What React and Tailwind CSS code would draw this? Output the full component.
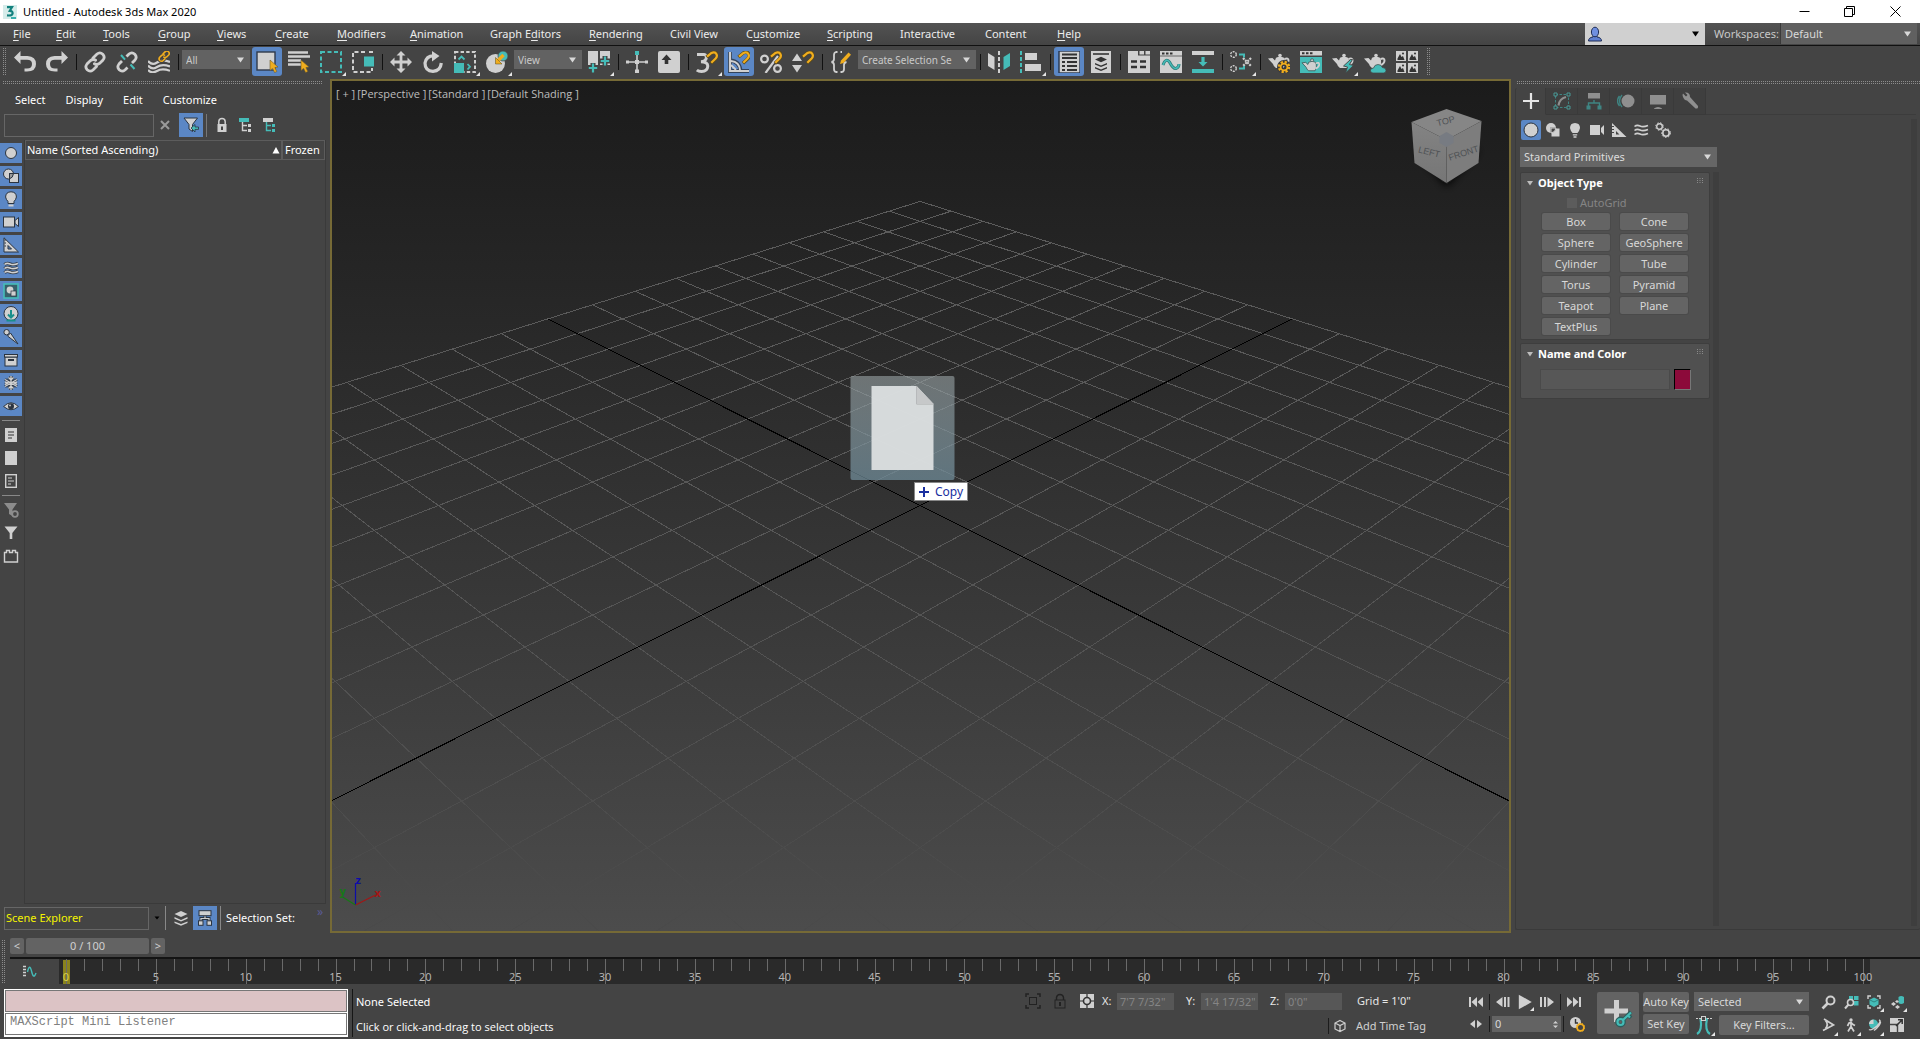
import React from "react";

const W = "#d0d0d0";
const T = "#45bcb8";
const O = "#f0ad1e";
const D = "#333333";

function Svg({ size = 22, vb = 22, className = "", children }) {
  return (
    <svg width={size} height={size} viewBox={`0 0 ${vb} ${vb}`} fill="none" className={`shrink-0 ${className}`} aria-hidden="true">
      {children}
    </svg>
  );
}

const Teapot = ({ fill = W, stroke = "none" }) => (
  <g stroke={stroke} strokeWidth="1" fill={fill}>
    <circle cx="12" cy="4.5" r="1.8" />
    <path d="M0 7.5 L4.5 7 L7 9.5 L8 6.8 Q12 4.6 16 6.8 L17 9 Q18 13 15.5 17 L8 17 Q5.5 15.5 5 13 Z" />
    <path d="M16.5 8 Q20.5 6.5 20.5 9.5 Q20.5 12.5 16 14.5" fill="none" stroke={fill} strokeWidth="2" />
  </g>
);

const Cursor = () => <path d="M14 9 L14 19.5 L16.6 17.4 L18.6 21.6 L20.8 20.6 L18.9 16.6 L22 16 Z" fill={O} stroke="#6b5a2a" strokeWidth=".6" />;

const Magnet = () => (
  <g fill="none">
    <path d="M10.5 6 L15.5 1.8 Q19 0 20.8 3 Q22 5.5 19.8 7.8 L15 12.2" stroke="#5a4a1a" strokeWidth="3.4" />
    <path d="M11 5.7 L15.5 2 Q19 .3 20.5 3.2 Q21.6 5.5 19.6 7.6 L15.3 11.8" stroke={O} strokeWidth="2.2" />
  </g>
);

const Chain = ({ color = W }) => (
  <g stroke={color} strokeWidth="2.8" strokeLinecap="round" fill="none">
    <path d="M9 7 L13 3 Q16 .6 18.8 3.2 Q21.4 6 19 9 L15.5 12.4 Q13 14.4 10.4 12.8" />
    <path d="M12.5 15.5 L9 19 Q6 21.4 3.2 18.8 Q.6 16 3 13 L6.5 9.6 Q9 7.6 11.6 9.2" />
  </g>
);

const TB = {
  undo: <path d="M0 6.5 L6.5 0 V5 H13.5 Q22 5.5 22 13 Q22 20.5 13 20.5 H10.5 V17.5 H13 Q18 17.5 18 13 Q18 8.8 13 8.8 H6.5 V13 Z" fill={W} />,
  redo: <path d="M22 6.5 L15.5 0 V5 H8.5 Q0 5.5 0 13 Q0 20.5 9 20.5 H11.5 V17.5 H9 Q4 17.5 4 13 Q4 8.8 9 8.8 H15.5 V13 Z" fill={W} />,
  link: <Chain />,
  unlink: (
    <>
      <g stroke={W} strokeWidth="2.8" fill="none">
        <path d="M10.5 5.5 L13 3 Q16 .6 18.8 3.2 Q21.4 6 19 9 L16 12" />
        <path d="M11.5 16.5 L9 19 Q6 21.4 3.2 18.8 Q.6 16 3 13 L6 10" />
      </g>
      <path d="M5 4 L9 8.6 M14.5 13.5 L18.5 18" stroke={T} strokeWidth="2" />
    </>
  ),
  bind: (
    <>
      <path d="M0 10 Q4 15 9 11.5 T22 11 M0 14.5 Q4 19.5 9 16 T22 15.5 M0 19 Q4 23 9 20 T22 19.8" stroke={W} strokeWidth="2.2" />
      <g transform="translate(10 -1) scale(.56)"><g stroke="#444" strokeWidth="6"><path d="M9 7 L13 3 Q16 .6 18.8 3.2 Q21.4 6 19 9 L15.5 12.4" /><path d="M12.5 15.5 L9 19 Q6 21.4 3.2 18.8 Q.6 16 3 13 L6.5 9.6" /></g><Chain color={O} /></g>
    </>
  ),
  select: (
    <>
      <rect x="1" y="1" width="18" height="18" fill={W} stroke="#2f3a4a" strokeWidth="1.4" />
      <Cursor />
    </>
  ),
  byName: (
    <>
      <path d="M0 1.5 H20 M0 5.5 H22 M0 9.5 H13 M0 13.5 H13" stroke={W} strokeWidth="2.4" />
      <g transform="translate(-1 0)"><Cursor /></g>
    </>
  ),
  rectSel: <rect x="1" y="1" width="20" height="20" stroke={T} strokeWidth="2" strokeDasharray="4 2.5" />,
  windowSel: (
    <>
      <path d="M13 1 H1 V21 H20 V17 M17 1 H20 V4" stroke={W} strokeWidth="2" strokeDasharray="4 2.5" />
      <rect x="12" y="5.5" width="10" height="10" fill={T} />
    </>
  ),
  move: <path d="M11 0 L15.5 4.5 H12.4 V9.6 H17.5 V6.5 L22 11 L17.5 15.5 V12.4 H12.4 V17.5 H15.5 L11 22 L6.5 17.5 H9.6 V12.4 H4.5 V15.5 L0 11 L4.5 6.5 V9.6 H9.6 V4.5 H6.5 Z" fill={W} />,
  rotate: (
    <>
      <path d="M13.5 5 Q4.5 4 3 12 Q3 20 11 20.3 Q18.5 20 19.3 12" stroke={W} strokeWidth="3.2" />
      <path d="M10 0 L17.5 5 L10 10.5 Z" fill={W} />
    </>
  ),
  scale: (
    <>
      <rect x="1" y="1" width="20" height="20" stroke={W} strokeWidth="2" strokeDasharray="3.4 2.2" />
      <rect x="0" y="12" width="10" height="10" fill={T} />
      <path d="M4.5 8.5 L7.5 5.5 L10.5 8.5 M13.5 13 L16 15.7 L13.5 18.5" stroke={T} strokeWidth="1.8" />
    </>
  ),
  place: (
    <>
      <circle cx="9.5" cy="12.5" r="9.5" fill={W} />
      <circle cx="17" cy="5" r="5" fill={T} stroke="#4a4a4a" strokeWidth=".8" />
      <path d="M17.5 4 L11 10.5" stroke={O} strokeWidth="3.4" />
      <path d="M9.5 6.5 V13 H16 Z" fill={O} stroke="#5a4a1a" strokeWidth=".5" />
    </>
  ),
  center: (
    <>
      <rect x="0" y="0" width="10" height="14" fill={W} />
      <rect x="12" y="0" width="10" height="14" fill={W} />
      <path d="M5 12 V22 M0 17 H10 M17 5 V15 M12 10 H22" stroke="#444" strokeWidth="5" />
      <path d="M5 12.5 V21.5 M.8 17 H9.2 M17 5.5 V14.5 M12.8 10 H21.2" stroke={T} strokeWidth="2.2" />
    </>
  ),
  manip: (
    <>
      <path d="M11 3 V20 M2 11 H20" stroke={W} strokeWidth="1.6" />
      <rect x="9" y="0" width="4" height="4" fill={T} />
      <rect x="9" y="9" width="4" height="4" fill={W} />
      <rect x="0" y="9.5" width="3" height="3" fill={W} />
      <rect x="19" y="9.5" width="3" height="3" fill={W} />
      <rect x="9" y="18.5" width="4" height="3.5" fill={W} />
    </>
  ),
  keyboard: (
    <>
      <rect x="0" y="0" width="22" height="22" rx="2" fill={W} />
      <path d="M8.5 3.5 L13.5 9 H10.3 V13 H6.7 V9 H3.5 Z" fill={D} />
    </>
  ),
  snap3: (
    <>
      <path d="M1 3.6 H8 Q10.800 4 10.300 7 Q9.800 10.400 5 10.800 Q11.600 11 11.800 15 Q11.500 20.500 5.500 20.500 Q2.500 20.500 .8 19" stroke={W} strokeWidth="3" />
      <Magnet />
    </>
  ),
  angle: (
    <>
      <path d="M2 1 V20 H21 M2 9.5 Q11.5 10 12.5 20" stroke="#33435a" strokeWidth="4" />
      <path d="M2 1 V20 H21" stroke={W} strokeWidth="2.2" />
      <path d="M3 10 Q11.5 11 12 19 M3 14 L8 19" stroke={W} strokeWidth="1.8" />
      <Magnet />
    </>
  ),
  percent: (
    <>
      <circle cx="4.5" cy="8" r="3.4" stroke={W} strokeWidth="2.2" />
      <circle cx="17.5" cy="17.5" r="3.4" stroke={W} strokeWidth="2.2" />
      <path d="M18 5 L5.5 22" stroke={W} strokeWidth="2.2" />
      <Magnet />
    </>
  ),
  spinner: (
    <>
      <path d="M0 10 L5 2.5 L10 10 Z M0 14 L5 21.5 L10 14 Z" fill={W} />
      <Magnet />
    </>
  ),
  selSet: (
    <>
      <path d="M7.5 1 H6 Q4 1.5 4 4 V8 Q4 10.5 1.5 11 Q4 11.5 4 14 V18 Q4 20.5 6 21 H7.5 M10.5 1 H12 M10.5 21 H12 Q14 20.5 14 18 V14 Q14 11.5 16.5 11" stroke={W} strokeWidth="1.8" />
      <path d="M10 13 L11 9.5 L18.5 1.5 L21 3.8 L13.5 12 Z" fill={O} />
    </>
  ),
  mirror: (
    <>
      <path d="M0 2 L6.5 6 V19 L0 15 Z" fill={W} />
      <path d="M11 0 V22" stroke={W} strokeWidth="2" strokeDasharray="4 2" />
      <path d="M22 2 L15.5 6 V19 L22 15 Z" fill={T} />
    </>
  ),
  align: (
    <>
      <path d="M1 0 V22" stroke={T} strokeWidth="2" strokeDasharray="4 2" />
      <rect x="5" y="2" width="12" height="7" fill={W} />
      <rect x="5" y="13" width="16" height="7" fill={W} />
    </>
  ),
  explorer: (
    <>
      <rect x="1" y="0" width="21" height="22" fill={W} stroke="#26344c" strokeWidth="1.4" />
      <path d="M4 3.5 H19 M4 7 H19 M4 11 H7 M9 11 H19 M4 15 H7 M9 15 H19 M4 19 H7 M9 19 H19" stroke={D} strokeWidth="1.8" />
    </>
  ),
  layers: (
    <>
      <rect x="1" y="0" width="20" height="22" fill={W} />
      <path d="M3 3 H19" stroke={D} strokeWidth="1.6" />
      <path d="M5 8.5 L11 5.8 L17 8.5 L11 11.2 Z M5 12 L11 14.5 L17 12 V13.6 L11 16 L5 13.6 Z M5 16 L11 18.5 L17 16 V17.6 L11 20 L5 17.6 Z" fill={D} />
    </>
  ),
  ribbon: (
    <>
      <path d="M0 0 H10 V4.5 H22 V22 H0 Z M11.5 0 H16 V3.5 H11.5 Z M17.5 0 H22 V3.5 H17.5 Z" fill={W} />
      <path d="M3 10.5 H9 M12 10.5 H18 M3 16 H9 M12 16 H18" stroke={D} strokeWidth="2.4" />
    </>
  ),
  curve: (
    <>
      <rect x="0" y="0" width="22" height="22" fill={W} />
      <path d="M2 2.5 H4.5 M6 2.5 H8.5 M10 2.5 H12.5" stroke={D} strokeWidth="2" />
      <path d="M0 5 H22" stroke="#666" strokeWidth="1" />
      <path d="M3 14 Q5.5 6.5 9.5 11 Q13 18 16 17.5 Q19 16.5 19 13" stroke="#2f7d7b" strokeWidth="3" />
      <path d="M3 14 Q5.5 6.5 9.5 11 Q13 18 16 17.5 Q19 16.5 19 13" stroke={T} strokeWidth="1.4" />
    </>
  ),
  schematic: (
    <>
      <rect x="0" y="0" width="22" height="4" fill={W} />
      <path d="M9.4 6 H12.6 V11 H15.5 L11 15.5 L6.5 11 H9.4 Z" fill={T} />
      <rect x="0" y="18" width="22" height="4" fill={T} />
    </>
  ),
  material: (
    <>
      <g stroke={W} strokeWidth="1.4" strokeDasharray="2 1">
        <circle cx="3.5" cy="3.5" r="2.8" />
        <circle cx="3.5" cy="17.5" r="2.8" />
        <path d="M13 7 L21 15 M21 7 L13 15" strokeWidth="2.2" />
      </g>
      <path d="M9 3.5 H14 V6.5 M9 17.5 H14 V15" stroke={T} strokeWidth="2" />
    </>
  ),
  renderSetup: (
    <>
      <Teapot />
      <circle cx="16" cy="16" r="4" stroke="#3a3a3a" strokeWidth="6" />
      <circle cx="16" cy="16" r="5" stroke={O} strokeWidth="2.4" strokeDasharray="2.2 1.73" />
      <circle cx="16" cy="16" r="3.4" stroke={O} strokeWidth="1.8" />
    </>
  ),
  renderFrame: (
    <>
      <rect x="0" y="0" width="22" height="4.5" fill={W} />
      <path d="M2 2.3 H4.5 M6 2.3 H8.5 M10 2.3 H12.5" stroke={D} strokeWidth="2" />
      <rect x="0" y="6" width="22" height="16" fill={T} />
      <g transform="translate(2 5.5) scale(.84)"><Teapot stroke="#3a5a5a" /></g>
    </>
  ),
  render: (
    <>
      <Teapot />
      <path d="M18.5 8.5 L11.5 15 L15.5 16 L13.5 22 L21.5 14.5 L17.5 13.5 L20.5 8.5 Z" fill={T} stroke="#444" strokeWidth=".9" />
    </>
  ),
  cloud: (
    <>
      <Teapot />
      <path d="M9 22 Q6.5 22 6.5 19.5 Q6.5 17 9.5 17 Q10.5 13.5 14 13.5 Q17.5 13.5 18.3 16.5 Q22 16.5 22 19.5 Q22 22 19.5 22 Z" fill={T} stroke="#444" strokeWidth=".7" />
    </>
  ),
  gallery: (
    <>
      {[[0, 0], [12, 0], [0, 12], [12, 12]].map(([x, y]) => (
        <g key={`${x}-${y}`} transform={`translate(${x} ${y})`}>
          <rect width="10" height="10" fill={W} />
          <path d="M1.5 9 V7.5 L4 3 L5.5 6 L7 5 L8.5 9 Z" fill={D} />
          <circle cx="7" cy="2.6" r="1" fill={D} />
        </g>
      ))}
    </>
  ),
};

function Corner() {
  return (
    <svg width="4" height="4" viewBox="0 0 4 4" className="absolute bottom-0 right-0" aria-hidden="true">
      <path d="M4 0 V4 H0 Z" fill="#e6e6e6" />
    </svg>
  );
}

function Tool({ id, label, active, corner }) {
  return (
    <button aria-label={label} className={`relative mx-px flex h-[29px] w-[30px] items-center justify-center rounded-[3px] ${active ? "bg-[#5b87c5]" : ""}`}>
      <Svg>{TB[id]}</Svg>
      {corner && <Corner />}
    </button>
  );
}

const Sep = () => <div className="flex w-1.5 justify-center"><div className="h-4 w-px bg-[#111]" /></div>;

function Combo({ label, value, className = "", arrow = "#d8d8d8", pad = "pl-1" }) {
  return (
    <div className={`relative flex items-center ${className}`}>
      <select aria-label={label} defaultValue={value} className={`h-full w-full appearance-none bg-transparent pr-5 outline-none ${pad}`}>
        <option>{value}</option>
      </select>
      <svg width="7" height="6" viewBox="0 0 7 6" className="pointer-events-none absolute right-[6px]" aria-hidden="true">
        <path d="M0 .5 H7 L3.5 5.5 Z" fill={arrow} />
      </svg>
    </div>
  );
}

const DOTS_H = "h-px bg-[repeating-linear-gradient(90deg,#8c8c8c_0_1px,transparent_1px_2px)]";
const DOTS_V = "w-px bg-[repeating-linear-gradient(180deg,#8c8c8c_0_1px,transparent_1px_2px)]";
const HGrip = ({ className = "" }) => (
  <div className={`flex flex-col gap-px ${className}`}><div className={DOTS_H} /><div className={DOTS_H} /></div>
);
const VGrip = ({ className = "" }) => (
  <div className={`flex gap-px ${className}`}><div className={DOTS_V} /><div className={DOTS_V} /></div>
);

function TitleBar() {
  return (
    <header className="flex h-[23px] shrink-0 items-center bg-white text-[12px] text-black">
      <Svg size={16} vb={16} className="ml-0.5">
        <rect x="1" y="1" width="14" height="14" fill="#d5ecea" />
        <path d="M5 3.2 H10 L7.8 6.8 Q10.8 7 10.6 9.5 Q10 12 5 11.4" stroke="#12807d" strokeWidth="2.2" />
        <path d="M9 14 H14" stroke="#12a19c" strokeWidth="1.6" />
      </Svg>
      <h1 className="ml-[5px] flex-1 text-[11px]">Untitled - Autodesk 3ds Max 2020</h1>
      <div className="flex h-full">
        <button aria-label="Minimize" className="flex w-[45px] items-center justify-center">
          <Svg size={11} vb={11}><path d="M.5 5.5 H10.5" stroke="#000" /></Svg>
        </button>
        <button aria-label="Restore" className="flex w-[45px] items-center justify-center">
          <Svg size={11} vb={11}><path d="M.5 2.5 H8.5 V10.5 H.5 Z M2.5 2.5 V.5 H10.5 V8.5 H8.5" stroke="#000" /></Svg>
        </button>
        <button aria-label="Close" className="mr-0.5 flex w-[46px] items-center justify-center">
          <Svg size={11} vb={11}><path d="M.5 .5 L10.5 10.5 M10.5 .5 L.5 10.5" stroke="#000" /></Svg>
        </button>
      </div>
    </header>
  );
}

const MENUS = [
  ["", "F", "ile", "w-[43px]"], ["", "E", "dit", "w-[47px]"], ["", "T", "ools", "w-[55px]"], ["", "G", "roup", "w-[59px]"],
  ["", "V", "iews", "w-[58px]"], ["", "C", "reate", "w-[62px]"], ["", "M", "odifiers", "w-[73px]"], ["", "A", "nimation", "w-[80px]"],
  ["Graph E", "d", "itors", "w-[99px]"], ["", "R", "endering", "w-[81px]"], ["Civil View", "", "", "w-[76px]"], ["C", "u", "stomize", "w-[81px]"],
  ["", "S", "cripting", "w-[73px]"], ["Interactive", "", "", "w-[85px]"], ["Content", "", "", "w-[72px]"], ["", "H", "elp", "w-[50px]"],
];

function MenuBar() {
  return (
    <div className="flex h-[23px] shrink-0 items-stretch border-b border-[#111] bg-gradient-to-b from-[#535353] to-[#444]">
      <nav className="ml-[13px] flex flex-1 items-center text-[#ececec]">
        {MENUS.map(([a, u, b, w]) => (
          <button key={a + u + b} className={`shrink-0 whitespace-nowrap text-left ${w}`}>
            {a}<span className="underline underline-offset-2">{u}</span>{b}
          </button>
        ))}
      </nav>
      <div className="flex w-[120px] items-center bg-[#d0d0d0]">
        <Svg size={16} vb={16} className="ml-0.5">
          <path d="M1.5 15 Q1.5 11.5 6 11 L6 10 H10 L10 11 Q14.5 11.5 14.5 15 Z" fill="#5f7fd0" stroke="#1f2d55" />
          <ellipse cx="8" cy="6" rx="3.6" ry="4.8" fill="#6f8fe0" stroke="#1f2d55" />
        </Svg>
        <Combo label="Account" value="" className="h-full flex-1" arrow="#000" />
      </div>
      <span className="ml-[9px] mr-px flex items-center text-[#c8c8c8]">Workspaces:</span>
      <Combo label="Workspaces" value="Default" className="mr-[3px] h-[21px] w-[137px] border-l border-[#3a3a3a] bg-[#606060] text-[#d8d8d8]" />
    </div>
  );
}

function MainToolbar() {
  const combo = "self-start mt-[4px] mx-px h-[19px] bg-[#626262] text-[#c9c9c9] text-[10px]";
  return (
    <div className="flex h-[33px] shrink-0 items-center pb-0.5">
      <VGrip className="ml-[3px] mr-[3px] h-[27px]" />
      <Tool id="undo" label="Undo" /><Tool id="redo" label="Redo" />
      <Sep />
      <Tool id="link" label="Select and Link" /><Tool id="unlink" label="Unlink Selection" /><Tool id="bind" label="Bind to Space Warp" />
      <Sep />
      <Combo label="Selection filter" value="All" className={`${combo} w-[68px]`} />
      <Tool id="select" label="Select Object" active /><Tool id="byName" label="Select by Name" />
      <Tool id="rectSel" label="Rectangular Selection Region" corner /><Tool id="windowSel" label="Window/Crossing" />
      <Sep />
      <Tool id="move" label="Select and Move" /><Tool id="rotate" label="Select and Rotate" />
      <Tool id="scale" label="Select and Scale" corner /><Tool id="place" label="Select and Place" corner />
      <Combo label="Reference coordinate system" value="View" className={`${combo} w-[68px]`} />
      <Tool id="center" label="Use Pivot Point Center" corner />
      <Sep />
      <Tool id="manip" label="Select and Manipulate" /><Tool id="keyboard" label="Keyboard Shortcut Override" />
      <Sep />
      <Tool id="snap3" label="Snaps Toggle" corner /><Tool id="angle" label="Angle Snap" active />
      <Tool id="percent" label="Percent Snap" /><Tool id="spinner" label="Spinner Snap" />
      <Sep />
      <Tool id="selSet" label="Edit Named Selection Sets" />
      <Combo label="Named selection sets" value="Create Selection Se" className={`${combo} w-[118px]`} />
      <Sep />
      <Tool id="mirror" label="Mirror" /><Tool id="align" label="Align" corner />
      <Sep />
      <Tool id="explorer" label="Toggle Scene Explorer" active /><Tool id="layers" label="Toggle Layer Explorer" />
      <Sep />
      <Tool id="ribbon" label="Toggle Ribbon" /><Tool id="curve" label="Curve Editor" /><Tool id="schematic" label="Dope Sheet" />
      <Sep />
      <Tool id="material" label="Material Editor" corner />
      <Sep />
      <Tool id="renderSetup" label="Render Setup" /><Tool id="renderFrame" label="Rendered Frame Window" />
      <Tool id="render" label="Render Production" corner /><Tool id="cloud" label="Render in Cloud" /><Tool id="gallery" label="Autodesk Gallery" />
      <VGrip className="ml-1 h-[27px]" />
    </div>
  );
}

const K = "#2b3440";
const waves = "M1.5 4.5 Q4 2.5 7 4 T15 3.5 M1.5 8.5 Q4 6.5 7 8 T15 7.5 M1.5 12.5 Q4 10.5 7 12 T15 11.5";
const SIDE = [
  ["Display Geometry", <circle cx="8" cy="8" r="5.5" fill={W} stroke={K} />],
  ["Display Shapes", <><circle cx="5.5" cy="6" r="5" fill={W} stroke={K} /><rect x="6.5" y="5.5" width="9" height="9" fill={W} stroke={K} /><path d="M6.5 10.8 V5.5 H10.5 Q10 10 6.5 10.8" fill="#9a9a9a" stroke={K} /></>],
  ["Display Lights", <><path d="M8 .8 Q13.4 1 13.4 6 Q13 8.5 11 10.5 V12.5 H5 V10.5 Q3 8.5 2.6 6 Q2.8 1 8 .8 Z" fill={W} stroke={K} /><path d="M5.5 14.5 H10.5" stroke={W} strokeWidth="2" /></>],
  ["Display Cameras", <><rect x=".5" y="3" width="11" height="10" fill={W} stroke={K} /><path d="M12 6.5 L15.5 3.5 V12.5 L12 9.5 Z" fill={W} stroke={K} /></>],
  ["Display Helpers", <><path d="M1 .8 L15.5 15 H1 Z" fill={W} stroke={K} /><path d="M5 8.5 L8.5 12 H5 Z" fill="#5b87c5" stroke={K} /><path d="M1.5 3 H3 M1.5 6 H3 M1.5 9 H3" stroke={K} /></>],
  ["Display Space Warps", <><path d={waves} stroke={K} strokeWidth="3.4" /><path d={waves} stroke={W} strokeWidth="1.6" /></>],
  ["Display Groups", <><rect x="1" y="1" width="14" height="14" fill="#38606a" stroke={T} strokeWidth="1.6" /><circle cx="7" cy="7" r="3.4" fill={W} /><rect x="8" y="8" width="5" height="5" fill={W} stroke={K} strokeWidth=".7" /></>],
  ["Display Xrefs", <><circle cx="8" cy="7.5" r="7" fill={W} stroke={K} /><path d="M8 4 V10 M5 8.5 L8 11.5 L11 8.5 M3.5 14.5 H12.5" stroke="#198f8b" strokeWidth="2" /></>],
  ["Display Bones", <><circle cx="3.6" cy="3.2" r="2.7" fill={W} stroke={K} /><path d="M4.5 7 L7.5 4 L15 15 Z" fill={W} stroke={K} /></>],
  ["Display Containers", <><rect x="2" y="5" width="12" height="9" fill={W} stroke={K} /><rect x="1.5" y="2.5" width="13" height="2.5" fill={W} stroke={K} /><path d="M5 8 H11" stroke={K} strokeWidth="2" /></>],
  ["Display Frozen Objects", <><path d="M8 1 V15 M2 4.5 L14 11.5 M2 11.5 L14 4.5 M5.5 2.5 L8 5 L10.5 2.5 M5.5 13.5 L8 11 L10.5 13.5 M2 7 L5 8 L2 9.500 M14 7 L11 8 L14 9.500" stroke={K} strokeWidth="3" /><path d="M8 1 V15 M2 4.5 L14 11.5 M2 11.5 L14 4.5 M5.5 2.5 L8 5 L10.5 2.5 M5.5 13.5 L8 11 L10.5 13.5 M2 7 L5 8 L2 9.500 M14 7 L11 8 L14 9.500" stroke={W} strokeWidth="1.4" /></>],
  ["Display Hidden Objects", <><path d="M.6 8.5 Q8 1 15.4 8.5 Q8 15 .6 8.5 Z" fill={W} stroke={K} /><circle cx="8" cy="8.2" r="3" fill={K} /><circle cx="7" cy="7.4" r=".9" fill={W} /></>],
];
const SIDE2 = [
  ["Select All", <><rect x="2" y="1" width="12" height="14" fill={W} /><path d="M5 5 H11 M5 8 H11 M5 11 H9" stroke={D} /></>],
  ["Select None", <rect x="2" y="1" width="12" height="14" fill={W} />],
  ["Select Invert", <><rect x="2.7" y="1.7" width="10.6" height="12.6" stroke={W} strokeWidth="1.4" /><path d="M5 5 H9 M5 8 H11 M5 11 H8" stroke={W} strokeWidth="1.2" /></>],
];
const SIDE3 = [
  ["Filter Settings", <><path d="M1 1 H14 L9.5 7.5 V14 L6 12 V7.5 Z" fill="#8c8c8c" /><circle cx="12" cy="12" r="2.8" stroke="#8c8c8c" strokeWidth="1.8" fill="#444" /></>],
  ["Filter", <path d="M1.5 1.5 H14.5 L9.3 8 V14 H6.7 V8 Z" fill={W} />],
  ["Containers", <path d="M1.5 4.5 H3.5 V2.5 H6.5 V4.5 H9.5 V2.5 H12.5 V4.5 H14.5 V14 H1.5 Z" stroke={W} strokeWidth="1.4" />],
];

const TreeIcon = ({ a, b }) => (
  <>
    <rect x="1" y="1" width="10" height="4" fill={a} />
    <path d="M4.5 5 V13.5 H9 M4.5 8.5 H9" stroke={b} strokeWidth="1.4" />
    <rect x="10" y="7" width="3" height="3" fill={b} /><rect x="10" y="12" width="3" height="3" fill={b} />
  </>
);

const SideGroup = ({ items, active }) => (
  <div className="flex flex-col gap-[3px]">
    {items.map(([l, i]) => (
      <button key={l} aria-label={l} className={`flex h-5 w-[22px] items-center justify-center ${active ? "bg-[#5b87c5]" : ""}`}><Svg size={16} vb={16}>{i}</Svg></button>
    ))}
  </div>
);

function SceneExplorer() {
  return (
    <aside className="flex w-[330px] shrink-0 flex-col pt-0.5">
      <HGrip className="ml-[3px] mr-[7px]" />
      <nav className="ml-[15px] mt-[7px] flex h-[18px] items-center gap-5 text-white">
        {["Select", "Display", "Edit", "Customize"].map((t) => <button key={t}>{t}</button>)}
      </nav>
      <div className="ml-1 mt-1 flex h-6 items-center">
        <input aria-label="Search" className="h-[23px] w-[150px] border border-[#666] bg-transparent px-1 outline-none" />
        <button aria-label="Clear search" className="ml-1.5"><Svg size={10} vb={10}><path d="M1 1 L9 9 M9 1 L1 9" stroke="#9a9a9a" strokeWidth="2" /></Svg></button>
        <button aria-label="Advanced filter" className="ml-[9px] flex h-6 w-6 items-center justify-center bg-[#5b87c5]">
          <Svg size={16} vb={16}>
            <path d="M1 1 H14.5 L9.5 7.5 V14.5 L6 12 V7.5 Z" fill={W} stroke={K} />
            <path d="M8 11 L12 7.5 V10 H15.5 V12.4 H12 V15 Z" fill={T} stroke={K} strokeWidth=".8" />
          </Svg>
        </button>
        <div className="ml-[3px] h-[23px] w-px bg-[#777]" />
        <div className="ml-[7px] flex gap-2">
          <button aria-label="Lock cell editing"><Svg size={16} vb={16}>
            <path d="M4.8 7 V4.5 Q5 1.5 8 1.5 Q11 1.5 11.2 4.5 V7" stroke={W} strokeWidth="1.5" /><rect x="3.5" y="7" width="9" height="8" fill={W} /><path d="M8 9.5 V13" stroke={D} strokeWidth="1.8" />
          </Svg></button>
          <button aria-label="Select children"><Svg size={16} vb={16}><TreeIcon a={T} b={W} /></Svg></button>
          <button aria-label="Select dependents"><Svg size={16} vb={16}><TreeIcon a={W} b={T} /></Svg></button>
        </div>
      </div>
      <div className="mt-[3px] flex min-h-0 flex-1">
        <div className="flex w-6 flex-col items-start pt-[3px]">
          <SideGroup items={SIDE} active />
          <div className="mb-1 ml-0.5 mt-1 h-px w-[18px] bg-[#888]" />
          <SideGroup items={SIDE2} />
          <div className="mb-1 ml-0.5 mt-1 h-px w-[18px] bg-[#888]" />
          <SideGroup items={SIDE3} />
        </div>
        <div className="mr-1 flex-1 border border-t-0 border-[#3a3a3a]">
          <table className="w-full border-separate border-spacing-0 text-white">
            <thead>
              <tr className="h-5">
                <th className="border border-[#5c5c5c] p-0 pl-px text-left font-normal">
                  <div className="flex items-center"><span className="flex-1">Name (Sorted Ascending)</span><Svg size={8} vb={8} className="mr-px"><path d="M4 1 L7.5 7.5 H.5 Z" fill="#fff" /></Svg></div>
                </th>
                <th className="w-[43px] border border-[#5c5c5c] p-0 pl-0.5 text-left font-normal">Frozen</th>
              </tr>
            </thead>
          </table>
        </div>
      </div>
      <div className="mb-[3px] mt-0.5 flex h-6 items-center">
        <input aria-label="Explorer name" defaultValue="Scene Explorer" className="ml-1 h-[23px] w-[145px] border border-[#666] bg-transparent px-px pb-0.5 text-[#f4f400] outline-none" />
        <button aria-label="Explorer list" className="ml-[5px]"><Svg size={6} vb={6}><path d="M.5 1.5 H5.5 L3 4.5 Z" fill="#000" /></Svg></button>
        <div className="ml-[5px] h-6 w-px bg-[#888]" />
        <button aria-label="Layers" className="ml-1.5 flex w-[18px] justify-center"><Svg size={16} vb={16}>
          <path d="M1.5 4 L8 1 L14.5 4 L8 7 Z M1.5 7 L8 10 L14.5 7 V8.8 L8 11.5 L1.5 8.8 Z M1.5 11.4 L8 14 L14.5 11.4 V13 L8 15.8 L1.5 13 Z" fill={W} />
        </Svg></button>
        <button aria-label="Hierarchy" className="ml-[3px] flex h-6 w-6 items-center justify-center bg-[#5b87c5]"><Svg size={16} vb={16}>
          <path d="M8 6 V8.5 M4 12 V8.5 H12 V12" stroke={K} strokeWidth="3" /><path d="M8 5 V8.5 M4 12 V8.5 H12 V12" stroke={W} strokeWidth="1.2" />
          <rect x="2" y=".7" width="12" height="5" fill={W} stroke={K} /><rect x="1.5" y="10.8" width="4.5" height="4.5" fill={W} stroke={K} /><rect x="10" y="10.8" width="4.5" height="4.5" fill={W} stroke={K} />
        </Svg></button>
        <div className="ml-[3px] h-6 w-px bg-[#888]" />
        <span className="ml-[5px] flex-1 text-white">Selection Set:</span>
        <button aria-label="More" className="mb-3 mr-[7px] text-[12px] leading-none text-[#5a5a96]">»</button>
      </div>
    </aside>
  );
}

/* Perspective ground plane: u and v run from -10 to 10 along the two axes. */
function project(u, v) {
  const depth = 17 - (u + v) / 2;
  return [920.6 + (818.8 * (u - v)) / depth, -315.5 + 13957 / depth];
}
function gridLine(u1, v1, u2, v2) {
  const [a, b] = project(u1, v1);
  const [c, d] = project(u2, v2);
  return `M${a.toFixed(1)} ${b.toFixed(1)} L${c.toFixed(1)} ${d.toFixed(1)}`;
}
const steps = Array.from({ length: 21 }, (_, i) => i - 10).filter((n) => n !== 0);
const GRID = steps.map((n) => gridLine(n, -10, n, 10) + gridLine(-10, n, 10, n)).join("");
const AXES = gridLine(0, -10, 0, 10) + gridLine(-10, 0, 10, 0);

function Viewport() {
  return (
    <main className="relative min-w-0 flex-1 overflow-hidden border-2 border-[#766a36] bg-gradient-to-b from-[#1b1b1b] to-[#4c4c4c]">
      <svg className="absolute inset-0 h-full w-full" viewBox="332 81 1178 850" preserveAspectRatio="xMidYMid slice" aria-label="Perspective view">
        <defs>
          <linearGradient id="gridFade" gradientUnits="userSpaceOnUse" x1="0" y1="200" x2="0" y2="880">
            <stop offset="0" stopColor="#5c5c5c" />
            <stop offset=".5" stopColor="#575757" />
            <stop offset="1" stopColor="#4a4a4a" />
          </linearGradient>
          <linearGradient id="drag" x1="0" y1="0" x2="0" y2="1">
            <stop offset="0" stopColor="#9aa4a6" stopOpacity=".6" />
            <stop offset="1" stopColor="#6f8b98" stopOpacity=".75" />
          </linearGradient>
          <linearGradient id="cubeL" x1="0" y1="0" x2="0" y2="1"><stop offset="0" stopColor="#838383" /><stop offset="1" stopColor="#767676" /></linearGradient>
          <filter id="soft" x="-30%" y="-30%" width="160%" height="160%"><feGaussianBlur stdDeviation="4" /></filter>
        </defs>
        <path d={GRID} stroke="url(#gridFade)" strokeWidth="1" fill="none" shapeRendering="crispEdges" />
        <path d={AXES} stroke="#000" strokeWidth="1" fill="none" shapeRendering="crispEdges" />

        <path d="M1416 150 L1447 187 L1480 150 Z" fill="#0c0c0c" filter="url(#soft)" />
        <path d="M1412 122 L1447 109 L1482 121 L1447 140 Z" fill="#868686" />
        <path d="M1412 122 L1447 140 L1447 183 L1415 163 Z" fill="url(#cubeL)" />
        <path d="M1482 121 L1447 140 L1447 183 L1479 163 Z" fill="#7d7d7d" />
        <path d="M1440 136 L1447 132 L1454 136 V143 L1447 147 L1440 143 Z" fill="#777b82" />
        <g fontFamily="Liberation Sans, Arial, sans-serif" fontSize="9" textAnchor="middle" fill="#4e5154">
          <text transform="translate(1429 155) rotate(14)">LEFT</text>
          <text transform="translate(1465 156) rotate(-18)">FRONT</text>
          <text transform="translate(1447 124) rotate(-14)">TOP</text>
        </g>

        <rect x="851" y="376" width="104" height="104" rx="2" fill="url(#drag)" />
        <path d="M872 386 H917 L934 404 V470 H872 Z" fill="#dcdfe0" fillOpacity=".95" />
        <path d="M917 386 V404 H934" fill="#c9cbcc" stroke="#a9abac" />
        <path d="M917 386 L934 404 H917 Z" fill="#c6c8c9" />

        <g fill="none" strokeWidth="1.2">
          <path d="M356 905 V883" stroke="#0d0da8" />
          <path d="M356 905 L376 895" stroke="#a31515" />
          <path d="M356 905 L343 897" stroke="#157a15" />
        </g>
        <g fontFamily="Noto Sans, sans-serif" fontWeight="bold" fontSize="11">
          <text x="356" y="884" fill="#0d0da8">z</text>
          <text x="375" y="897" fill="#a31515">x</text>
          <text x="340" y="895" fill="#157a15">y</text>
        </g>
      </svg>
      <div className="absolute left-1 top-[5px] flex gap-0.5 text-[#bdbdbd]">
        {["[ + ]", "[Perspective ]", "[Standard ]", "[Default Shading ]"].map((t) => <button key={t} className="font-['Open_Sans',sans-serif]">{t}</button>)}
      </div>
      <div className="absolute left-[582px] top-[401px] flex h-[19px] items-center gap-1.5 border border-[#888] bg-white pl-1 pr-1 text-[12px] text-[#1a2fa0]">
        <Svg size={10} vb={10}><path d="M5 0 V10 M0 5 H10" stroke="#1a2fa0" strokeWidth="2" /></Svg>
        Copy
      </div>
    </main>
  );
}

const G = "#8f8f8f";
const TABS = [
  ["Create", <path d="M9 1 V17 M1 9 H17" stroke="#e6e6e6" strokeWidth="2.2" />],
  ["Modify", <><rect x="2.5" y="2.5" width="13" height="13" stroke="#3f8583" strokeDasharray="2.5 1.5" /><path d="M1 1h3v3H1z M14 1h3v3h-3z M1 14h3v3H1z M14 14h3v3h-3z" fill="#3a3a3a" stroke="#4a9a97" /><path d="M5.5 13.5 Q6.5 6.5 13 5" stroke={G} strokeWidth="2.2" /></>],
  ["Hierarchy", <><rect x="3" y="1" width="12" height="5.5" fill={G} /><path d="M9 8 V11 M3.5 14 V11 H14.5 V14" stroke="#3f8583" strokeWidth="1.4" /><rect x="1.5" y="13.5" width="4" height="4" fill="#3f8583" /><rect x="12.5" y="13.5" width="4" height="4" fill="#3f8583" /></>],
  ["Motion", <><circle cx="11" cy="9" r="6.5" fill={G} /><path d="M5 3 Q0 9 5 15 M2.5 4 Q-1.5 9 2.5 14" stroke="#3f8583" strokeWidth="1.4" /></>],
  ["Display", <><rect x="1" y="3" width="16" height="9.5" fill={G} /><path d="M5.5 16.5 Q9 14.5 12.5 16.5 Z" fill={G} stroke={G} /></>],
  ["Utilities", <path d="M2 5 Q1 2.5 2 1.5 L5 4.5 L6.5 3 L4 .5 Q9 0 9 5 L17 14 Q17.5 17 14.5 16.5 L6 8.5 Q3.5 8.5 2 5 Z" fill={G} />],
];
const CATS = [
  ["Geometry", <circle cx="8" cy="8" r="7" fill={W} stroke={K} />],
  ["Shapes", <><circle cx="6" cy="6" r="5" fill={W} /><rect x="6" y="6" width="9" height="9" fill={W} stroke="#444" /><path d="M6 11 V6 H11 Q10.5 10.5 6 11" fill="#444" stroke={W} /></>],
  ["Lights", <><path d="M8 1 Q13 1.2 13 6 Q12.6 8.5 10.5 11 H5.5 Q3.4 8.5 3 6 Q3 1.2 8 1 Z" fill={W} /><path d="M5.8 12.8 H10.2 M6.5 15 H9.5" stroke={W} strokeWidth="1.3" /></>],
  ["Cameras", <><rect x="1" y="3" width="10" height="10" fill={W} /><path d="M12 6 L15 3 V13 L12 10 Z" fill={W} /></>],
  ["Helpers", <path fillRule="evenodd" d="M1 1 L15.5 15 H1 Z M5 9 V12.5 H8.5 Z M1 4 h2 v1 h-2z M1 7 h2 v1 h-2z M1 10 h2 v1 h-2z" fill={W} />],
  ["Space Warps", <path d={waves} stroke={W} strokeWidth="1.6" />],
  ["Systems", <><circle cx="4.5" cy="4.5" r="2.8" stroke={W} strokeWidth="1.4" /><circle cx="4.5" cy="4.5" r="3.8" stroke={W} strokeDasharray="1.5 1.5" /><circle cx="11" cy="11" r="3.2" stroke={W} strokeWidth="1.6" /><circle cx="11" cy="11" r="4.5" stroke={W} strokeDasharray="1.6 1.6" /></>],
];

function Rollout({ title, children }) {
  return (
    <section className="rounded-[2px] border border-[#3e3e3e] bg-[#505050]">
      <div className="flex h-5 items-center px-1.5">
        <Svg size={6} vb={6}><path d="M0 1 H6 L3 5.5 Z" fill="#bdbdbd" /></Svg>
        <h2 className="ml-[5px] flex-1 font-bold text-white">{title}</h2>
        <Svg size={6} vb={6} className="mb-1"><path d="M0 .5 H6 M0 2.5 H6 M0 4.5 H6" stroke="#8a8a8a" strokeDasharray="1 1.5" /></Svg>
      </div>
      {children}
    </section>
  );
}

const OBJECTS = ["Box", "Cone", "Sphere", "GeoSphere", "Cylinder", "Tube", "Torus", "Pyramid", "Teapot", "Plane", "TextPlus"];

function CommandPanel() {
  return (
    <aside className="flex w-[409px] shrink-0 flex-col pl-1 pt-0.5">
      <HGrip className="ml-0.5" />
      <div className="mb-[3px] mt-1 flex min-h-0 flex-1 flex-col rounded-[2px] border-b border-l border-[#3a3a3a]">
        <div className="flex h-[27px] items-stretch">
          {TABS.map(([l, i], n) => (
            <button key={l} aria-label={l} className={`flex items-center justify-center border-b border-r border-[#3a3a3a] ${n ? "w-[32px] bg-[#3f3f3f]" : "w-[30px] border-b-transparent"}`}>
              <Svg size={18} vb={18}>{i}</Svg>
            </button>
          ))}
          <div className="mr-1 flex-1 border-b border-[#3c3c3c]" />
        </div>
        <div className="flex min-h-0 flex-1 pr-[3px]">
          <div className="flex w-[203px] flex-col pl-1">
            <div className="ml-px mt-[5px] flex gap-0.5">
              {CATS.map(([l, i], n) => (
                <button key={l} aria-label={l} className={`flex size-5 items-center justify-center rounded-[2px] ${n ? "" : "bg-[#5b87c5]"}`}><Svg size={16} vb={16}>{i}</Svg></button>
              ))}
            </div>
            <Combo label="Category" value="Standard Primitives" className="mt-[7px] h-5 w-[197px] shrink-0 bg-[#666] text-[#dcdcdc]" />
            <div className="mt-[5px] flex min-h-0 flex-1 gap-[3px]">
              <div className="flex w-[190px] flex-col gap-[3px]">
                <Rollout title="Object Type">
                  <label className="flex h-5 items-center gap-[3px] pl-[46px] text-[#858585]">
                    <input type="checkbox" disabled className="size-2.5 appearance-none bg-[#5c5c5c]" />AutoGrid
                  </label>
                  <div className="grid grid-cols-2 gap-x-[10px] gap-y-1 pb-1 pl-[21px] pr-[21px] text-[#d8d8d8]">
                    {OBJECTS.map((o) => <button key={o} className="h-[17px] rounded-[2px] bg-[#646464] leading-[15px] shadow-[0_0_0_1px_#4a4a4a]">{o}</button>)}
                  </div>
                </Rollout>
                <Rollout title="Name and Color">
                  <div className="flex gap-1 pb-2 pl-[19px] pt-[5px]">
                    <input aria-label="Object name" className="h-[21px] w-[130px] border border-[#4a4a4a] bg-[#575757] px-1 outline-none" />
                    <button aria-label="Object color" className="h-[21px] w-[17px] border border-t-black border-l-black border-b-[#777] border-r-[#777] bg-[#8c0a3a]" />
                  </div>
                </Rollout>
              </div>
              <div className="mb-[3px] w-1.5 bg-[#3e3e3e]" />
            </div>
          </div>
          <div className="flex-1" />
          <div className="mb-[3px] mt-1 w-1.5 bg-[#3e3e3e]" />
        </div>
      </div>
    </aside>
  );
}

const FRAMES = Array.from({ length: 101 }, (_, i) => i);

function TimeLine() {
  const btn = "h-4 rounded-[2px] bg-[#636363] text-[#d0d0d0] leading-4";
  return (
    <div className="flex shrink-0 pt-[3px]">
      <VGrip className="ml-0.5 mt-1 h-[43px]" />
      <div className="ml-[5px] flex min-w-0 flex-1 flex-col">
        <div className="flex gap-0.5 pt-0.5">
          <button className={`${btn} w-3.5`}>&lt;</button>
          <button className={`${btn} w-[123px]`}>0 / 100</button>
          <button className={`${btn} w-3.5`}>&gt;</button>
        </div>
        <div className="mt-[3px] flex border-t-2 border-[#141414]">
          <button aria-label="Open mini curve editor" className="flex w-[49px] items-center pl-3">
            <Svg size={15} vb={15}><path d="M1 2.5 H4 M1 5.5 H4 M1 8.5 H4 M1 11.5 H4" stroke={W} strokeWidth="1.4" /><path d="M5.5 8 Q7.5 -1 9.5 7 Q11.5 16 14 9" stroke={T} strokeWidth="1.4" /></Svg>
          </button>
          <div className="relative mr-[50px] flex h-[25px] min-w-0 flex-1 bg-[#2a2a2a] pl-[7px] pr-1.5">
            {FRAMES.map((f) => (
              <div key={f} className={`relative ${f === 100 ? "w-px" : "min-w-0 flex-1"}`}>
                {f === 0 && <div className="absolute -left-[3px] top-px h-6 w-[7px] bg-[#8a831d]" />}
                <div className={`absolute left-0 top-0 w-px bg-[#6a6a6a] ${f % 5 ? "h-3" : "h-[25px]"}`} />
                {f % 5 === 0 && <span className={`absolute left-0 top-[11px] -translate-x-1/2 leading-[14px] ${f ? "text-[#b4b4b4]" : "text-[#d6d04a]"}`}>{f}</span>}
              </div>
            ))}
          </div>
        </div>
      </div>
    </div>
  );
}

function Coord({ axis, value }) {
  return (
    <label className="flex items-center gap-[3px] text-[#e6e6e6]">
      <span className="w-3">{axis}:</span>
      <input defaultValue={value} className="h-[17px] w-[57px] bg-[#575757] px-[3px] text-[#858585] outline-none" />
    </label>
  );
}

const VLine = ({ h = "h-4" }) => <div className={`w-px bg-[#1c1c1c] ${h}`} />;

const NAV = [
  ["Zoom", <><circle cx="9.5" cy="5.5" r="4" stroke={W} strokeWidth="2" /><path d="M6.5 8.5 L1.5 13.5" stroke={W} strokeWidth="2.6" /></>, false],
  ["Zoom All", <><path d="M5 1 h4 v4 h-4z M10 1 h4.5 v4 h-4.5z M10 6 h4.5 v4.5 h-4.5z" fill={T} /><circle cx="6.5" cy="7.5" r="3" stroke={W} strokeWidth="1.6" fill="#444" /><path d="M4.5 9.5 L1 13.5" stroke={W} strokeWidth="2" /></>, false],
  ["Zoom Extents", <><path d="M1 4 V1 H4 M10 1 H13 V4 M13 10 V13 H10 M4 13 H1 V10" stroke={W} strokeWidth="1.4" /><path d="M7 2.5 L11.5 4.8 V9.5 L7 12 L2.5 9.5 V4.8 Z" fill={T} /><path d="M3 5 L7 7 L11 5" stroke="#2a7573" strokeWidth=".8" /></>, true],
  ["Zoom Extents All", <><path d="M8.5 2 Q11 0 14 2 V8 Q11 10 8.5 8 Z" fill={T} /><path d="M1 9 L3.5 7 L6 9 L3.5 11 Z M5 12 L7.5 10 L10 12 L7.5 14 Z M5 6.5 l2 -1.5 2 1.5 -2 1.5z" fill={W} /></>, true],
  ["Field of View", <path d="M3 1 L12.5 7 L2 12.5 M4.5 2.5 Q8 6.5 4.5 10.5" stroke={W} strokeWidth="1.7" />, true],
  ["Walk Through", <><circle cx="7" cy="2" r="1.7" fill={W} /><path d="M7 4 V8.5 L4 13.5 M7 8.5 L10 13.5 M3.5 8 L5 5 L7 4.5 L9 6.5 L11 7.5" stroke={W} strokeWidth="1.7" /></>, true],
  ["Orbit", <><circle cx="6.5" cy="6" r="4.5" fill={T} /><path d="M6.5 1.500 V6 H2 Q2 2 6.500 1.500" fill={W} /><path d="M12 2 Q15 3 10 8 Q4 13 2 11.5 M13.5 4 Q13 8 7 12.5" stroke={W} strokeWidth="1.5" /></>, true],
  ["Maximize Viewport", <><rect x="0" y="0" width="14" height="14" fill={W} /><path d="M0 6.5 H7.5 V14" stroke="#444" strokeWidth="1.4" /><path d="M6 8 L12 2 M8 1.8 H12.2 V6" stroke={D} strokeWidth="1.5" /></>, false],
];

function StatusBar() {
  const grey = "bg-[#636363] text-[#d8d8d8]";
  const key = `${grey} rounded-[2px] w-[46px] h-5 leading-5 whitespace-nowrap`;
  return (
    <footer className="flex h-[55px] shrink-0 pb-0.5 pt-[5px]">
      <div className="ml-1 flex w-[344px] flex-col bg-white p-px">
        <input aria-label="Macro recorder" className="h-[22px] w-full border border-[#777] bg-[#dcc3c5] px-1 outline-none" />
        <input aria-label="MAXScript Mini Listener" placeholder="MAXScript Mini Listener" className="mt-px h-[22px] w-full border border-[#777] bg-white px-1 pb-1 font-['Liberation_Mono',monospace] text-[12px] placeholder:text-[#808080] outline-none" />
      </div>
      <div className="ml-1 w-px bg-[#161616]" />
      <div className="ml-[3px] flex flex-1 flex-col justify-between pb-0.5 pt-[5px] text-white">
        <p className="leading-4">None Selected</p>
        <p className="font-['Open_Sans',sans-serif] leading-4">Click or click-and-drag to select objects</p>
      </div>
      <div className="flex w-[449px] flex-col">
        <div className="ml-1.5 flex h-[26px] items-center">
          <button aria-label="Isolate selection" className="mr-[11px]"><Svg size={16} vb={16}><path d="M1 4 V1 H4 M12 1 H15 V4 M15 12 V15 H12 M4 15 H1 V12" stroke="#222" strokeWidth="1.5" /><rect x="4.5" y="4.5" width="7" height="7" stroke="#222" /></Svg></button>
          <button aria-label="Lock selection" className="mr-[11px]"><Svg size={16} vb={16}><path d="M4.5 7 V4.5 Q5 1.5 8 1.5 Q11 1.5 11.5 4.5 V7" stroke="#222" strokeWidth="1.4" /><rect x="3" y="7" width="10" height="8" stroke="#222" /><path d="M8 9 V13" stroke="#222" strokeWidth="2" /></Svg></button>
          <button aria-label="Absolute mode" className="mr-[7px]"><Svg size={16} vb={16}><rect x="1" y="1" width="14" height="14" fill={W} /><circle cx="8" cy="8" r="3.5" stroke={D} strokeWidth="1.6" /><path d="M8 1 V4 M8 12 V15 M1 8 H4 M12 8 H15" stroke={D} strokeWidth="1.2" /></Svg></button>
          <div className="flex gap-3">
            <Coord axis="X" value={`7'7 7/32"`} /><Coord axis="Y" value={`1'4 17/32"`} /><Coord axis="Z" value={`0'0"`} />
          </div>
          <span className="ml-[15px] text-[#e6e6e6]">Grid = 1'0"</span>
        </div>
        <button className="ml-[309px] flex h-6 items-center pt-0.5 text-[#d0d0d0]">
          <VLine />
          <Svg size={14} vb={14} className="ml-1"><path d="M7 1.5 L12 4 V10 L7 12.5 L2 10 V4 Z M2 4 L7 6.5 L12 4 M7 6.5 V12.5" stroke={W} strokeWidth="1.2" /></Svg>
          <span className="ml-[9px]">Add Time Tag</span>
        </button>
      </div>
      <div className="flex w-[125px] flex-col">
        <div className="flex h-[25px] items-center gap-[5px]">
          <button aria-label="Go to start"><Svg size={16} vb={16}><path d="M1 3h2v10h-2z M9 3 V13 L3.5 8 Z M15 3 V13 L9.5 8 Z" fill={W} /></Svg></button>
          <VLine />
          <button aria-label="Previous frame"><Svg size={16} vb={16}><path d="M7.5 3 V13 L1 8 Z M9 3h2v10h-2z M12.5 3h2v10h-2z" fill={W} /></Svg></button>
          <button aria-label="Play" className="relative"><Svg size={18} vb={16}><path d="M2.5 1.5 L14 8 L2.5 14.5 Z" fill={W} /></Svg><Corner /></button>
          <button aria-label="Next frame"><Svg size={16} vb={16}><path d="M8.5 3 V13 L15 8 Z M1 3h2v10h-2z M5 3h2v10h-2z" fill={W} /></Svg></button>
          <VLine />
          <button aria-label="Go to end"><Svg size={16} vb={16}><path d="M13 3h2v10h-2z M1 3 V13 L6.5 8 Z M7 3 V13 L12.5 8 Z" fill={W} /></Svg></button>
        </div>
        <div className="flex h-5 items-center">
          <button aria-label="Key mode" className="mr-[5px]"><Svg size={16} vb={16}><path d="M7 4 V12 L2 8 Z M9 4 V12 L14 8 Z" fill={W} /></Svg></button>
          <VLine />
          <div className={`ml-0.5 flex h-4 w-[69px] items-center ${grey}`}>
            <input aria-label="Current frame" defaultValue="0" className="min-w-0 flex-1 bg-transparent px-[3px] outline-none" />
            <Svg size={9} vb={9} className="mr-px"><path d="M2 3.5 H7 L4.5 1 Z M2 5.5 H7 L4.5 8 Z" fill={W} /></Svg>
          </div>
          <div className="ml-0.5"><VLine /></div>
          <button aria-label="Time configuration" className="ml-[5px]"><Svg size={16} vb={16}><circle cx="6.5" cy="6.5" r="5.5" fill={W} /><path d="M6.5 3 V7 H9" stroke={D} strokeWidth="1.4" /><circle cx="11.5" cy="11.5" r="3.4" fill="#444" stroke={O} strokeWidth="1.8" /><circle cx="11.5" cy="11.5" r="4.3" stroke={O} strokeDasharray="1.5 1.5" /></Svg></button>
        </div>
      </div>
      <button aria-label="Set Keys" className={`mx-1 mt-[3px] flex h-[42px] w-[42px] items-center justify-center rounded-[2px] ${grey}`}>
        <Svg size={30} vb={30}><path d="M13.5 2 V24 M1.5 13 H25" stroke={W} strokeWidth="5" /><circle cx="17.5" cy="24" r="3.4" stroke="#2c5f5d" strokeWidth="4" /><path d="M20 22 L28 14 M25 17 L28 20" stroke="#2c5f5d" strokeWidth="4" /><circle cx="17.5" cy="24" r="3" stroke={T} strokeWidth="2.2" /><path d="M20 22 L28 14.5 M25 17.5 L27 19.5" stroke={T} strokeWidth="2.2" /></Svg>
      </button>
      <div className="mt-[3px] flex flex-col gap-0.5">
        <button className={key}>Auto Key</button>
        <button className={key}>Set Key</button>
      </div>
      <div className="ml-[5px] mt-[3px] flex w-[115px] flex-col gap-1">
        <Combo label="Key set" value="Selected" className={`h-[19px] ${grey}`} />
        <div className="flex items-start gap-1">
          <button aria-label="Tangents" className="relative"><Svg size={21} vb={21}><path d="M3 19 Q8.5 16 6.5 3 M16 19 Q10.5 16 13 3" stroke={T} strokeWidth="2.2" /><path d="M2 3.5 H7 M13 3.5 H18" stroke={W} strokeDasharray="2 1" /><rect x="7.5" y="1.5" width="4" height="4" stroke={W} fill="#444" /></Svg><Corner /></button>
          <button className={`h-5 flex-1 rounded-[2px] ${grey}`}>Key Filters...</button>
        </div>
      </div>
      <div className="ml-[9px] mr-[13px] mt-[3px] grid grid-cols-4 gap-x-[3px] gap-y-0.5">
        {NAV.map(([l, i, c]) => (
          <button key={l} aria-label={l} className="relative flex size-5 items-center justify-center"><Svg size={15} vb={15}>{i}</Svg>{c && <Corner />}</button>
        ))}
      </div>
    </footer>
  );
}

export default function App() {
  return (
    <div className="flex h-screen flex-col overflow-hidden bg-[#444] font-['Noto_Sans','Open_Sans',sans-serif] text-[11px] leading-4 text-[#d0d0d0]">
      <TitleBar />
      <MenuBar />
      <MainToolbar />
      <div className="flex min-h-0 flex-1">
        <SceneExplorer />
        <Viewport />
        <CommandPanel />
      </div>
      <TimeLine />
      <StatusBar />
    </div>
  );
}
